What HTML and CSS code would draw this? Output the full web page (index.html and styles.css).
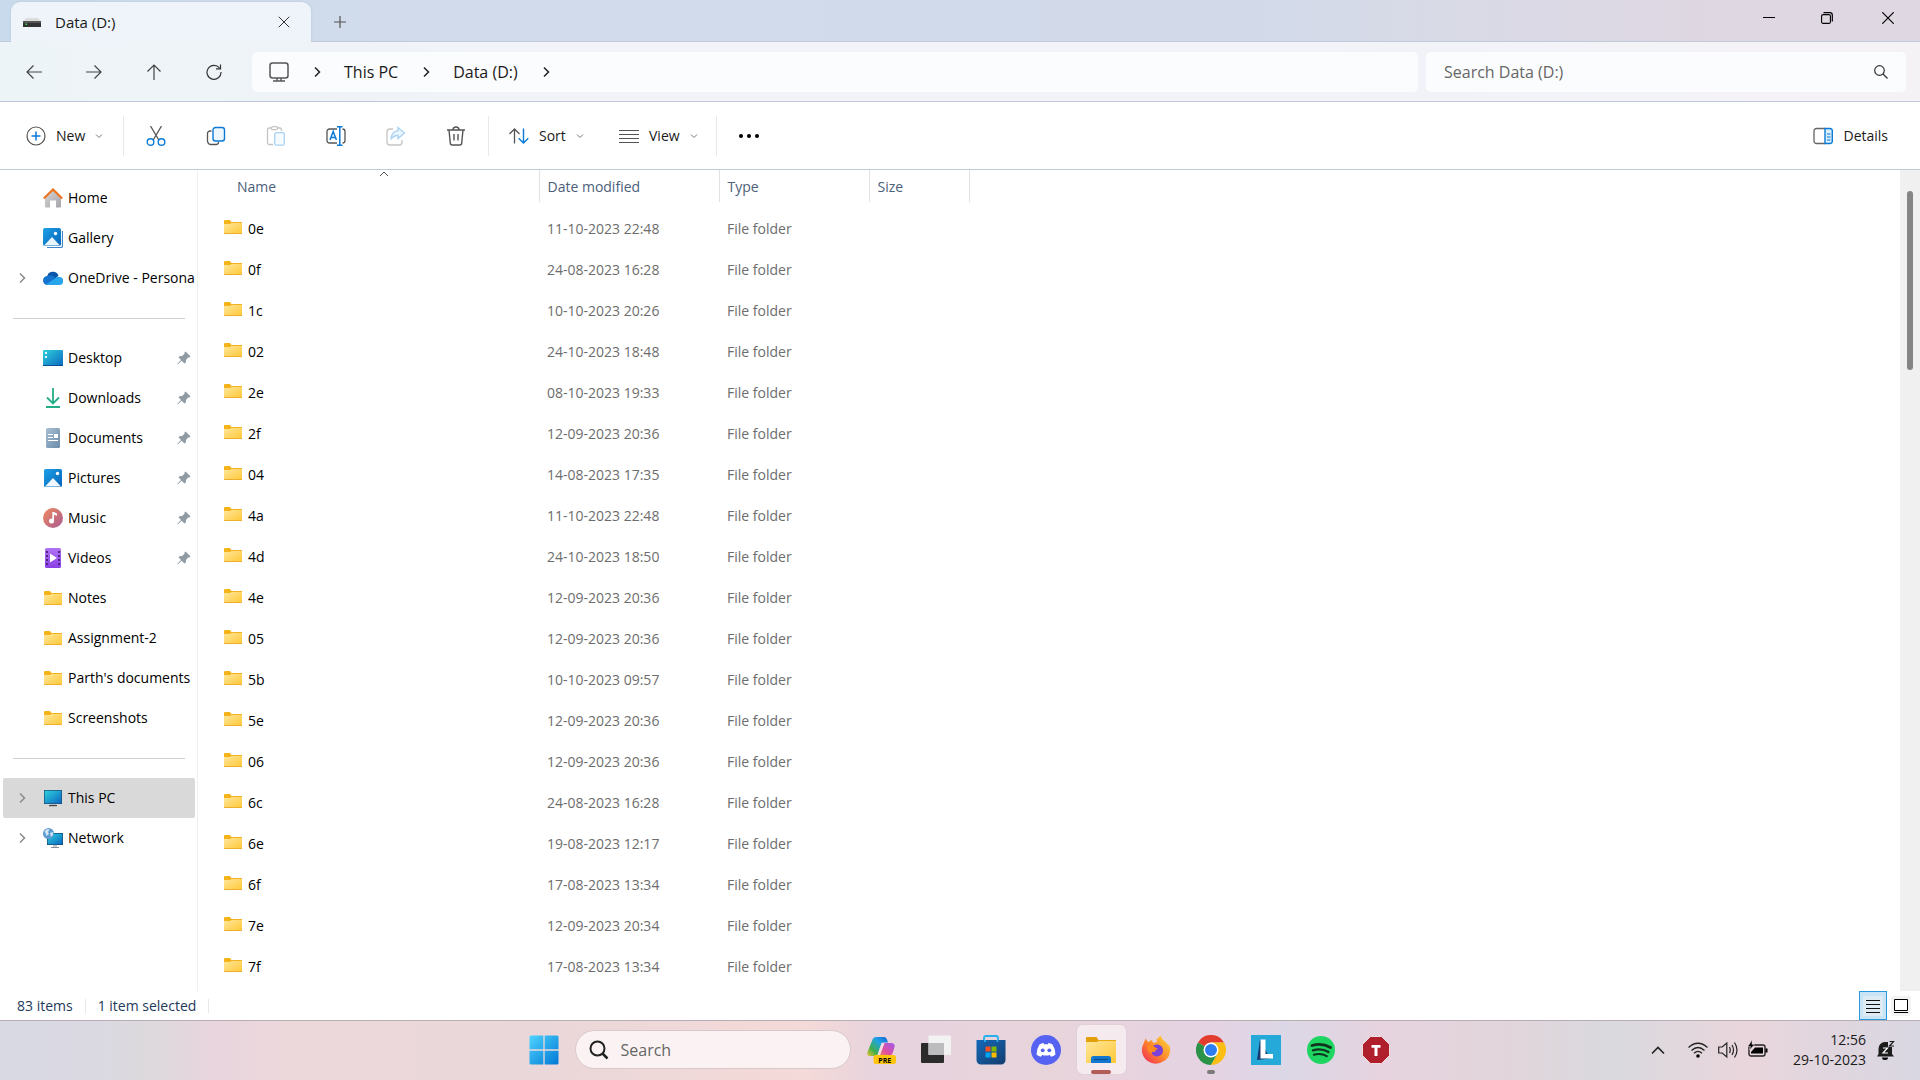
FILE: index.html
```html
<!DOCTYPE html>
<html lang="en">
<head>
<meta charset="utf-8">
<title>Data (D:)</title>
<link rel="stylesheet" href="styles.css">
</head>
<body>
<svg class="sprite" aria-hidden="true">
  <defs>
    <linearGradient id="g-folder" x1="0" y1="0" x2="1" y2="1"><stop offset="0" stop-color="#ffe69a"/><stop offset="1" stop-color="#ffc837"/></linearGradient>
    <linearGradient id="g-blue" x1="0" y1="0" x2="1" y2="1"><stop offset="0" stop-color="#1ba0e8"/><stop offset="1" stop-color="#0763b8"/></linearGradient>
    <linearGradient id="g-cyan" x1="0" y1="0" x2="1" y2="1"><stop offset="0" stop-color="#2fd0dd"/><stop offset="1" stop-color="#0a68c0"/></linearGradient>
    <linearGradient id="g-gray" x1="0" y1="0" x2="1" y2="1"><stop offset="0" stop-color="#d6d6d8"/><stop offset="1" stop-color="#a5a5aa"/></linearGradient>
    <linearGradient id="g-doc" x1="0" y1="0" x2="1" y2="1"><stop offset="0" stop-color="#a9bfd3"/><stop offset="1" stop-color="#6a8ba8"/></linearGradient>
    <linearGradient id="g-music" x1="0" y1="0" x2="1" y2="1"><stop offset="0" stop-color="#f08a5c"/><stop offset="1" stop-color="#a95b94"/></linearGradient>
    <linearGradient id="g-video" x1="0" y1="0" x2="0" y2="1"><stop offset="0" stop-color="#b073f4"/><stop offset="1" stop-color="#8a3fe4"/></linearGradient>
    <linearGradient id="g-win" x1="0" y1="0" x2="1" y2="1"><stop offset="0" stop-color="#4fd4ff"/><stop offset="1" stop-color="#0078d4"/></linearGradient>
    <linearGradient id="g-copa" x1="1" y1="0" x2="0" y2="1"><stop offset="0" stop-color="#1a5fd0"/><stop offset=".35" stop-color="#1fa3e6"/><stop offset=".7" stop-color="#3fae4f"/><stop offset="1" stop-color="#e9c526"/></linearGradient>
    <linearGradient id="g-copb" x1="1" y1="0" x2="0" y2="1"><stop offset="0" stop-color="#a05af0"/><stop offset=".6" stop-color="#e0509c"/><stop offset="1" stop-color="#f2903c"/></linearGradient>
    <linearGradient id="g-store" x1="0" y1="0" x2="1" y2="1"><stop offset="0" stop-color="#1568b8"/><stop offset="1" stop-color="#123e6e"/></linearGradient>
    <linearGradient id="g-fox" x1="1" y1="0" x2="0" y2="1"><stop offset="0" stop-color="#ffe03a"/><stop offset=".5" stop-color="#ff8a2a"/><stop offset="1" stop-color="#f0225c"/></linearGradient>
  </defs>
  <symbol id="folder" viewBox="0 0 18 14"><path d="M0 1q0-1 1-1h5l1.500 2v2H0z" fill="#f5b31a"/><path d="M7 2h11v2H7z" fill="#f2b122"/><path d="M0 4h6l1.500-1H18v11H0z" fill="url(#g-folder)"/><path d="M0 13h18v1H0z" fill="#eeb02c"/></symbol>
  <symbol id="chev-r" viewBox="0 0 8 12"><path d="M2 1.500 6.500 6 2 10.500" fill="none" stroke="currentColor" stroke-width="1.500"/></symbol>
  <symbol id="chev-d" viewBox="0 0 8 6"><path d="M1 1.500 4 4.500 7 1.500" fill="none" stroke="#777" stroke-width="1"/></symbol>
  <symbol id="pin" viewBox="0 0 14 14"><path d="M8.500.500 13.500 5.200 12.500 6.400 11 6.500 9 9 8.800 11.500 7.500 12.500 4.700 9.700 1 13.200.300 13.500.700 12.600 4 9 1.500 6.300 2.500 5.200 5.200 5 7.500 2.800 7.600 1.200z" fill="#909aa3"/></symbol>
</svg>

<div class="window">
  <header class="titlebar">
    <div class="tab">
      <svg class="i18" viewBox="0 0 18 18"><path d="M3 5h12l3 4H0z" fill="#dcdcdc"/><path d="M0 8h18v6H0z" fill="#333"/><path d="M0 8h18v2H0z" fill="#555"/><path d="M2.500 10.500h1.500V12H2.500z" fill="#3be04a"/></svg>
      <span class="tab-title">Data (D:)</span>
      <button class="icon-btn tab-close" aria-label="Close tab"><svg class="i12" viewBox="0 0 12 12"><path d="M.800.800 11.200 11.200M11.200.800.800 11.200" fill="none" stroke="#333" stroke-width="1"/></svg></button>
    </div>
    <button class="icon-btn new-tab" aria-label="New tab"><svg class="i12" viewBox="0 0 12 12"><path d="M6 0v12M0 6h12" fill="none" stroke="#555" stroke-width="1.200"/></svg></button>
    <div class="win-controls">
      <button class="icon-btn win-btn" aria-label="Minimize"><svg class="i12" viewBox="0 0 12 12"><path d="M0 5.500h12" stroke="#000"/></svg></button>
      <button class="icon-btn win-btn" aria-label="Restore"><svg class="i12" viewBox="0 0 12 12"><rect x=".600" y="2.600" width="8.800" height="8.800" rx="1.500" fill="none" stroke="#000" stroke-width="1.100"/><path d="M2.500.700H9A2.300 2.300 0 0 1 11.300 3V9.500" fill="none" stroke="#000" stroke-width="1.200"/></svg></button>
      <button class="icon-btn win-btn" aria-label="Close"><svg class="i12" viewBox="0 0 12 12"><path d="M.300.300 11.700 11.700M11.700.300.300 11.700" stroke="#000" stroke-width="1.200"/></svg></button>
    </div>
  </header>

  <div class="navbar">
    <div class="nav-buttons">
      <button class="icon-btn nav-btn" aria-label="Back"><svg class="i16" viewBox="0 0 16 16"><path d="M16 8H1M7.500 1.500 1 8 7.500 14.500" fill="none" stroke="#444" stroke-width="1.200"/></svg></button>
      <button class="icon-btn nav-btn" aria-label="Forward"><svg class="i16" viewBox="0 0 16 16"><path d="M0 8H15M8.500 1.500 15 8 8.500 14.500" fill="none" stroke="#444" stroke-width="1.200"/></svg></button>
      <button class="icon-btn nav-btn" aria-label="Up"><svg class="i16" viewBox="0 0 16 16"><path d="M8 16V1M1.500 7.500 8 1 14.500 7.500" fill="none" stroke="#444" stroke-width="1.200"/></svg></button>
      <button class="icon-btn nav-btn" aria-label="Refresh"><svg class="i16" viewBox="0 0 16 16"><path d="M13.500 4A7 7 0 1 0 15 8M14.500.500V4.800H10" fill="none" stroke="#333" stroke-width="1.200"/></svg></button>
    </div>
    <nav class="address" aria-label="Path">
      <svg class="i20 crumb-icon" viewBox="0 0 20 20"><rect x="1" y="1" width="18" height="15" rx="2.500" fill="none" stroke="#555" stroke-width="1.500"/><path d="M8 16v3M12 16v3M4 19h12" stroke="#555" stroke-width="1.400"/></svg>
      <svg class="crumb-sep"><use href="#chev-r"/></svg>
      <a class="crumb" href="#pc">This PC</a>
      <svg class="crumb-sep"><use href="#chev-r"/></svg>
      <a class="crumb" href="#data">Data (D:)</a>
      <svg class="crumb-sep"><use href="#chev-r"/></svg>
    </nav>
    <div class="searchbox">
      <input class="search-input" type="text" placeholder="Search Data (D:)" aria-label="Search Data (D:)">
      <svg class="i14" viewBox="0 0 14 14"><circle cx="5.500" cy="5.500" r="4.800" fill="none" stroke="#333" stroke-width="1.200"/><path d="M9 9 13.500 13.500" stroke="#333" stroke-width="1.200"/></svg>
    </div>
  </div>

  <div class="toolbar">
    <button class="tool tool-new"><svg class="i20" viewBox="0 0 20 20"><circle cx="10" cy="10" r="9" fill="none" stroke="#555" stroke-width="1.200"/><path d="M10 5.500v9M5.500 10h9" stroke="#0b7ad6" stroke-width="1.500"/></svg><span>New</span><svg class="caret"><use href="#chev-d"/></svg></button>
    <span class="tool-sep"></span>
    <button class="tool-icon" aria-label="Cut"><svg class="i20" viewBox="0 0 20 20"><path d="M4.500 0 12.800 14M15.500 0 7.200 14" fill="none" stroke="#555" stroke-width="1.300"/><circle cx="4.500" cy="16" r="3.300" fill="none" stroke="#0b7ad6" stroke-width="1.400"/><circle cx="15.500" cy="16" r="3.300" fill="none" stroke="#0b7ad6" stroke-width="1.400"/></svg></button>
    <button class="tool-icon" aria-label="Copy"><svg class="i20" viewBox="0 0 20 20"><path d="M5.500 5H4a2.500 2.500 0 0 0-2.500 2.500V15A3.500 3.500 0 0 0 5 18.500h5A2.500 2.500 0 0 0 12.500 16" fill="none" stroke="#555" stroke-width="1.300"/><rect x="7" y="1.500" width="11.500" height="13.500" rx="2.500" fill="#eef7fe" stroke="#0b7ad6" stroke-width="1.400"/></svg></button>
    <button class="tool-icon" aria-label="Paste" disabled><svg class="i20" viewBox="0 0 20 20"><path d="M5 2H3a1.500 1.500 0 0 0-1.500 1.500V17A1.500 1.500 0 0 0 3 18.500h4M12 2h2a1.500 1.500 0 0 1 1.500 1.500V5" fill="none" stroke="#c4c4c4" stroke-width="1.300"/><rect x="5.500" y=".700" width="6" height="3" rx="1.200" fill="none" stroke="#c4c4c4" stroke-width="1.200"/><rect x="8.700" y="6.700" width="9.600" height="12.500" rx="1.500" fill="#f5faff" stroke="#a9d2f3" stroke-width="1.300"/></svg></button>
    <button class="tool-icon" aria-label="Rename"><svg class="i20" viewBox="0 0 20 20"><path d="M11 3H3.500A2.500 2.500 0 0 0 1 5.500v9A2.500 2.500 0 0 0 3.500 17H11M16.500 3A2.500 2.500 0 0 1 19 5.500v9A2.500 2.500 0 0 1 16.500 17" fill="none" stroke="#555" stroke-width="1.300"/><path d="M4 14 7.200 5.500 10.400 14M5 11.500h4.400" fill="none" stroke="#0b7ad6" stroke-width="1.500"/><path d="M13.800 1v18M11 .800h5.500M11 19.200h5.500" fill="none" stroke="#0b7ad6" stroke-width="1.500"/></svg></button>
    <button class="tool-icon" aria-label="Share" disabled><svg class="i20" viewBox="0 0 20 20"><path d="M7 3H4a3 3 0 0 0-3 3v10a3 3 0 0 0 3 3h9a3 3 0 0 0 3-3v-2" fill="none" stroke="#c4c4c4" stroke-width="1.300"/><path d="M12 1.500 18.500 7 12 12.500V9.500C8.500 9.500 6.500 10.500 5 13.500 5 8.500 8 5 12 4.700z" fill="#eaf5fe" stroke="#a9d2f3" stroke-width="1.300"/></svg></button>
    <button class="tool-icon" aria-label="Delete"><svg class="i20" viewBox="0 0 20 20"><path d="M1 4h18M7 4a3 3 0 0 1 6 0M3 4l1.300 13A2 2 0 0 0 6.300 19h7.400a2 2 0 0 0 2-2L17 4M8 8v6.500M12 8v6.500" fill="none" stroke="#555" stroke-width="1.400"/></svg></button>
    <span class="tool-sep"></span>
    <button class="tool tool-sort"><svg class="i20" viewBox="0 0 20 20"><path d="M5.500 17.500V3M.500 8 5.500 3 10.500 8" fill="none" stroke="#555" stroke-width="1.300"/><path d="M14.500 2.500V17M9.700 12.200 14.500 17 19.300 12.200" fill="none" stroke="#0b7ad6" stroke-width="1.400"/></svg><span>Sort</span><svg class="caret"><use href="#chev-d"/></svg></button>
    <button class="tool tool-view"><svg class="i20" viewBox="0 0 20 20"><path d="M0 4.500h20M0 8.500h20M0 12.500h20M0 16.500h20" stroke="#555" stroke-width="1.200"/></svg><span>View</span><svg class="caret"><use href="#chev-d"/></svg></button>
    <span class="tool-sep"></span>
    <button class="tool-icon" aria-label="See more"><svg class="i20" viewBox="0 0 20 20"><circle cx="2" cy="10" r="2"/><circle cx="10" cy="10" r="2"/><circle cx="18" cy="10" r="2"/></svg></button>
    <button class="tool tool-details"><svg class="i20" viewBox="0 0 20 20"><path d="M12 2.500H3.500A2.500 2.500 0 0 0 1 5v10a2.500 2.500 0 0 0 2.500 2.500H12" fill="none" stroke="#666" stroke-width="1.300"/><path d="M12 2.500h5A2.300 2.300 0 0 1 19.300 5v10A2.300 2.300 0 0 1 17 17.500h-5z" fill="#d9effd" stroke="#0b7ad6" stroke-width="1.400"/><path d="M14 8h3.500M14 11h3.500M14 14h3.500" stroke="#0b7ad6" stroke-width="1.200"/></svg><span>Details</span></button>
  </div>

  <div class="content">
    <nav class="sidebar" aria-label="Folders">
      <a class="side-item" href="#home"><svg class="i20" viewBox="0 0 20 20"><path d="M2 9 10 2l8 7v9.500q0 1-1 1h-4v-7H7v7H3q-1 0-1-1z" fill="url(#g-gray)"/><path d="M.800 10.500 10 1.500 19.200 10.500" fill="none" stroke="#ee7420" stroke-width="2.200"/></svg><span>Home</span></a>
      <a class="side-item" href="#gallery"><svg class="i20" viewBox="0 0 20 20"><path d="M4 19.500h14q1.500 0 1.500-1.500V3" fill="none" stroke="#3f86cc" stroke-width="1.200"/><rect width="18" height="18" rx="2" fill="url(#g-blue)"/><path d="M1 17.500 9 9l8 8.500z" fill="#e8f5fd"/><circle cx="12.500" cy="5.500" r="1.700" fill="#fff"/></svg><span>Gallery</span></a>
      <a class="side-item" href="#onedrive"><svg class="expand"><use href="#chev-r"/></svg><svg class="i20" viewBox="0 0 20 20"><path d="M4 9a6 6 0 0 1 11.500-1.500L10 13z" fill="#0a56a8"/><path d="M4.500 8a4.500 4.500 0 0 0 0 9h6l4-5C12 8 8 6.500 4.500 8z" fill="#1573cf"/><path d="M5 17 3 16.500 12 10.500q2-2.500 4.500-1.500a4 4 0 0 1-.500 8z" fill="#28a4ea"/></svg><span class="clip">OneDrive - Persona</span></a>
      <hr class="side-rule">
      <a class="side-item" href="#desktop"><svg class="i20" viewBox="0 0 20 20"><rect y="2" width="20" height="16" rx="1" fill="url(#g-cyan)"/><path d="M2 4h2v2H2zM2 8h2v2H2z" fill="#e6fbff"/><path d="M0 17h20v1H0z" fill="#0b4e94"/></svg><span>Desktop</span><svg class="pin"><use href="#pin"/></svg></a>
      <a class="side-item" href="#downloads"><svg class="i20" viewBox="0 0 20 20"><path d="M10 0v15M4 9.500 10 15.500 16 9.500M3 19h14" fill="none" stroke="#24ad88" stroke-width="1.800"/></svg><span>Downloads</span><svg class="pin"><use href="#pin"/></svg></a>
      <a class="side-item" href="#documents"><svg class="i20" viewBox="0 0 20 20"><rect x="3" width="14" height="20" rx="1.500" fill="url(#g-doc)"/><path d="M5 6.500h5M5 9.500h5M5 12.500h10" stroke="#fff"/><path d="M11 6h4v4h-4z" fill="#fff"/></svg><span>Documents</span><svg class="pin"><use href="#pin"/></svg></a>
      <a class="side-item" href="#pictures"><svg class="i20" viewBox="0 0 20 20"><rect x="1" y="1" width="18" height="18" rx="1.500" fill="url(#g-blue)"/><path d="M2 18.500 10 10l8 8.500z" fill="#eef8fe"/><circle cx="14.500" cy="5.500" r="1.700" fill="#fff"/></svg><span>Pictures</span><svg class="pin"><use href="#pin"/></svg></a>
      <a class="side-item" href="#music"><svg class="i20" viewBox="0 0 20 20"><circle cx="10" cy="10" r="10" fill="url(#g-music)"/><circle cx="8.500" cy="13" r="2.500" fill="#fff"/><path d="M9.300 4h1.700l3 1.500v2.200l-3-1V13H9.300z" fill="#fff"/></svg><span>Music</span><svg class="pin"><use href="#pin"/></svg></a>
      <a class="side-item" href="#videos"><svg class="i20" viewBox="0 0 20 20"><rect x="2" width="16" height="20" rx="1.500" fill="url(#g-video)"/><path d="M4 3v15M16 3v15" stroke="#4c2680" stroke-width="2" stroke-dasharray="2 2"/><path d="M7 5.500 14 10l-7 4.500z" fill="#fff"/></svg><span>Videos</span><svg class="pin"><use href="#pin"/></svg></a>
      <a class="side-item" href="#notes"><svg class="folder"><use href="#folder"/></svg><span>Notes</span></a>
      <a class="side-item" href="#assignment"><svg class="folder"><use href="#folder"/></svg><span>Assignment-2</span></a>
      <a class="side-item" href="#parth"><svg class="folder"><use href="#folder"/></svg><span>Parth's documents</span></a>
      <a class="side-item" href="#screenshots"><svg class="folder"><use href="#folder"/></svg><span>Screenshots</span></a>
      <hr class="side-rule">
      <a class="side-item selected" href="#pc"><svg class="expand"><use href="#chev-r"/></svg><svg class="i20" viewBox="0 0 20 20"><path d="M7 15h6v3H7z" fill="#b9c0c6"/><path d="M6 17h8v1.200H6z" fill="#444"/><path d="M1 2h18v14H1z" fill="#1b4e78"/><path d="M1.700 2.700h16.600v12.600H1.700z" fill="url(#g-cyan)"/></svg><span>This PC</span></a>
      <a class="side-item" href="#network"><svg class="expand"><use href="#chev-r"/></svg><svg class="i20" viewBox="0 0 20 20"><path d="M10 16h4v3h-4z" fill="#c4cad0"/><path d="M8 19h8v1H8z" fill="#8a9299"/><path d="M4 5h16v12H4z" fill="#174b78"/><path d="M4.700 5.700h14.600v10.600H4.700z" fill="url(#g-cyan)"/><circle cx="5.500" cy="5.500" r="5.500" fill="#5d9bd0"/><path d="M1.500 3q3-3 5-1.500L5 4 6 6 3.500 8zM7 5l3-1v3L8 9z" fill="#cfe3f2"/></svg><span>Network</span></a>
    </nav>

    <main class="files">
      <svg class="sort-mark" viewBox="0 0 10 6"><path d="M1 5 5 1 9 5" fill="none" stroke="#555"/></svg>
      <table class="file-table">
        <colgroup><col class="c-name"><col class="c-date"><col class="c-type"><col class="c-size"><col></colgroup>
        <thead><tr><th>Name</th><th>Date modified</th><th>Type</th><th>Size</th><th class="fill"></th></tr></thead>
        <tbody>
          <tr><td><svg class="folder"><use href="#folder"/></svg>0e</td><td>11-10-2023 22:48</td><td>File folder</td><td></td><td></td></tr>
          <tr><td><svg class="folder"><use href="#folder"/></svg>0f</td><td>24-08-2023 16:28</td><td>File folder</td><td></td><td></td></tr>
          <tr><td><svg class="folder"><use href="#folder"/></svg>1c</td><td>10-10-2023 20:26</td><td>File folder</td><td></td><td></td></tr>
          <tr><td><svg class="folder"><use href="#folder"/></svg>02</td><td>24-10-2023 18:48</td><td>File folder</td><td></td><td></td></tr>
          <tr><td><svg class="folder"><use href="#folder"/></svg>2e</td><td>08-10-2023 19:33</td><td>File folder</td><td></td><td></td></tr>
          <tr><td><svg class="folder"><use href="#folder"/></svg>2f</td><td>12-09-2023 20:36</td><td>File folder</td><td></td><td></td></tr>
          <tr><td><svg class="folder"><use href="#folder"/></svg>04</td><td>14-08-2023 17:35</td><td>File folder</td><td></td><td></td></tr>
          <tr><td><svg class="folder"><use href="#folder"/></svg>4a</td><td>11-10-2023 22:48</td><td>File folder</td><td></td><td></td></tr>
          <tr><td><svg class="folder"><use href="#folder"/></svg>4d</td><td>24-10-2023 18:50</td><td>File folder</td><td></td><td></td></tr>
          <tr><td><svg class="folder"><use href="#folder"/></svg>4e</td><td>12-09-2023 20:36</td><td>File folder</td><td></td><td></td></tr>
          <tr><td><svg class="folder"><use href="#folder"/></svg>05</td><td>12-09-2023 20:36</td><td>File folder</td><td></td><td></td></tr>
          <tr><td><svg class="folder"><use href="#folder"/></svg>5b</td><td>10-10-2023 09:57</td><td>File folder</td><td></td><td></td></tr>
          <tr><td><svg class="folder"><use href="#folder"/></svg>5e</td><td>12-09-2023 20:36</td><td>File folder</td><td></td><td></td></tr>
          <tr><td><svg class="folder"><use href="#folder"/></svg>06</td><td>12-09-2023 20:36</td><td>File folder</td><td></td><td></td></tr>
          <tr><td><svg class="folder"><use href="#folder"/></svg>6c</td><td>24-08-2023 16:28</td><td>File folder</td><td></td><td></td></tr>
          <tr><td><svg class="folder"><use href="#folder"/></svg>6e</td><td>19-08-2023 12:17</td><td>File folder</td><td></td><td></td></tr>
          <tr><td><svg class="folder"><use href="#folder"/></svg>6f</td><td>17-08-2023 13:34</td><td>File folder</td><td></td><td></td></tr>
          <tr><td><svg class="folder"><use href="#folder"/></svg>7e</td><td>12-09-2023 20:34</td><td>File folder</td><td></td><td></td></tr>
          <tr><td><svg class="folder"><use href="#folder"/></svg>7f</td><td>17-08-2023 13:34</td><td>File folder</td><td></td><td></td></tr>
        </tbody>
      </table>
    </main>
    <div class="scrollbar"><div class="thumb"></div></div>
  </div>

  <footer class="status">
    <span class="status-cell">83 items</span>
    <span class="status-cell">1 item selected</span>
    <div class="view-modes">
      <button class="mode mode-on" aria-label="Details view"><svg class="i20" viewBox="0 0 20 20"><rect width="20" height="20" rx="2" fill="#dfebf2"/><path d="M3 4.500h14M3 8.500h14M3 12.500h14M3 16.500h14" stroke="#111"/></svg></button>
      <button class="mode" aria-label="Large icons view"><svg class="i20" viewBox="0 0 20 20"><rect width="20" height="20" rx="2" fill="#f3f3f3"/><path d="M3.500 3.500h13v11h-13z" fill="#fff" stroke="#000"/><path d="M3 16.500h14" stroke="#000"/></svg></button>
    </div>
  </footer>
</div>

<div class="taskbar">
  <div class="apps">
    <button class="app" aria-label="Start"><svg class="i30" viewBox="0 0 30 30"><rect x=".500" y=".500" width="29" height="29" rx="1.500" fill="url(#g-win)"/><path d="M15 0v30M0 15h30" stroke="#ecd9db" stroke-width="1.300"/></svg></button>
    <label class="task-search"><svg class="i20" viewBox="0 0 20 20"><circle cx="8.500" cy="8.500" r="7" fill="none" stroke="#222" stroke-width="2"/><path d="M13.500 13.500 18.500 18.500" stroke="#222" stroke-width="2.500"/></svg><input class="task-input" type="text" placeholder="Search" aria-label="Search"></label>
    <button class="app" aria-label="Copilot"><svg class="i30" viewBox="0 0 30 30"><path d="M7 3.500Q8 2 10 2h8q2 0 2.800 2l1.200 3.500h-4.500Q15.500 8 14.500 11l-2.500 8q-.800 2-3 2H4q-3.500 0-2.500-4z" fill="url(#g-copa)"/><path d="M18.500 8h7q4 .500 3 4l-1.500 5q-1 4-5 4H11.500q2 0 2.700-2.500z" fill="url(#g-copb)"/><path d="M17 8l-4.500 13" stroke="#f5d9e4" stroke-width="2.500"/><rect x="7.500" y="20" width="22.500" height="9" rx="2.500" fill="#ffc40c"/><text class="pre" x="18.800" y="27.500" text-anchor="middle">PRE</text></svg></button>
    <button class="app" aria-label="Task view"><svg class="i30" viewBox="0 0 30 30"><rect x="0" y="8" width="23" height="20" rx="1" fill="#2b2b2b"/><rect x="7.500" y=".500" width="22.500" height="19.500" rx="1" fill="#f2f2f2"/><path d="M7.500 8H23v12H7.500z" fill="#bcbcbe"/></svg></button>
    <button class="app" aria-label="Store"><svg class="i30" viewBox="0 0 30 30"><path d="M8 7V3q0-2 2-2h10q2 0 2 2v4" fill="none" stroke="#26b1ee" stroke-width="1.800"/><path d="M.500 5h29v20a4.500 4.500 0 0 1-4.500 4.500H5A4.500 4.500 0 0 1 .500 25z" fill="url(#g-store)"/><path d="M8 5h1.800v2H8zM20.500 5h1.800v2h-1.800z" fill="#26b1ee"/><path d="M9.500 11.500h5v5h-5z" fill="#f25022"/><path d="M15.500 11.500h5v5h-5z" fill="#7fba00"/><path d="M9.500 17.500h5v5h-5z" fill="#00a4ef"/><path d="M15.500 17.500h5v5h-5z" fill="#ffb900"/></svg></button>
    <button class="app" aria-label="Discord"><svg class="i30" viewBox="0 0 30 30"><circle cx="15" cy="15" r="15" fill="#5562f2"/><path d="M8.500 9.500Q10.500 8.200 12.500 8l.700 1.200h3.600L17.500 8q2 .200 4 1.500 3 4.500 3 10-2 1.800-4.500 2.200l-1-1.700q-4 1-8 0L10 21.700q-2.500-.400-4.500-2.200 0-5.500 3-10z" fill="#fff"/><circle cx="11.700" cy="15.300" r="1.900" fill="#5562f2"/><circle cx="18.300" cy="15.300" r="1.900" fill="#5562f2"/></svg></button>
    <button class="app app-active" aria-label="File Explorer"><svg class="i30" viewBox="0 0 30 30"><path d="M0 3q0-1 1-1h9.500l2 3v4H0z" fill="#e3a00b"/><path d="M12 5h18v4H12z" fill="#e8a90f"/><path d="M0 7h11l2-1h17v22H0z" fill="url(#g-folder)"/><path d="M5 28v-4.500Q5 21 7.500 21h15q2.500 0 2.500 2.500V28z" fill="#1378cf"/><path d="M8 24.500h14" stroke="#0a4f96" stroke-width="1.200"/></svg></button>
    <button class="app" aria-label="Firefox"><svg class="i30" viewBox="0 0 30 30"><path d="M3 7.500 4.500 3.500 7 7l4-2 1 3 4-1-.500-2.500L19.500.500 22 5q3.500 2 5 5l1.500.500Q31 20 24 25.500 15 31.500 6.500 26-1 20 1.500 11z" fill="url(#g-fox)"/><circle cx="16" cy="15.500" r="6" fill="#7a42d8"/><path d="M6 12q4-3 8.500.500L17 14q-3 .500-3 3-3.500-1-4 2-3-2-4-7z" fill="#ff8a1e"/></svg></button>
    <button class="app app-running" aria-label="Chrome"><svg class="i30" viewBox="0 0 30 30"><path d="M15 15 2 7.500A15 15 0 0 1 28 7.500H15z" fill="#e33b2e"/><path d="M2 7.500A15 15 0 0 0 15 30l6.500-11.250L15 15z" fill="#2a9347"/><path d="M28 7.500A15 15 0 0 1 15 30l6.500-11.250L15 15V7.500z" fill="#fcbd14"/><circle cx="15" cy="15" r="7.500" fill="#fff"/><circle cx="15" cy="15" r="6" fill="#2d7df0"/></svg></button>
    <button class="app" aria-label="L"><svg class="i30" viewBox="0 0 30 30"><path d="M0 0h30v30H0z" fill="#25a9d9"/><path d="M9 4.500 6 25l13-1.500z" fill="#173a6e"/><path d="M9.500 4.500h5V19H22v4.500H9.500z" fill="#fff"/></svg></button>
    <button class="app" aria-label="Spotify"><svg class="i30" viewBox="0 0 30 30"><circle cx="15" cy="15" r="14" fill="#1fd562"/><path d="M6 10.500q10-3 18.500 2" fill="none" stroke="#10331d" stroke-width="2.800" stroke-linecap="round"/><path d="M7 15.300q8.500-2.500 15.500 1.700" fill="none" stroke="#10331d" stroke-width="2.300" stroke-linecap="round"/><path d="M7.800 19.800q7-2 13 1.400" fill="none" stroke="#10331d" stroke-width="2" stroke-linecap="round"/></svg></button>
    <button class="app" aria-label="T"><svg class="i30" viewBox="0 0 30 30"><path d="M9.500 1.500h11l8 8v11l-8 8h-11l-8-8v-11z" fill="#b01f2c" stroke="#f3dede" stroke-width="1"/><path d="M10.500 10h9v2.800h-3V21h-3v-8.200h-3z" fill="#fff"/></svg></button>
  </div>
  <div class="tray">
    <button class="icon-btn tray-btn" aria-label="Show hidden icons"><svg class="i14" viewBox="0 0 14 14"><path d="M1 10.500 7 4.500 13 10.500" fill="none" stroke="#222" stroke-width="1.600"/></svg></button>
    <button class="icon-btn status-icons" aria-label="Network, volume, battery">
      <svg class="i20" viewBox="0 0 20 20"><path d="M.500 7.500Q10-1 19.500 7.500M3.500 10.500Q10 4.500 16.500 10.500M6 13.200Q10 9.500 14 13.200" fill="none" stroke="#222" stroke-width="1.300"/><circle cx="10" cy="16" r="1.800"/></svg>
      <svg class="i20" viewBox="0 0 20 20"><path d="M.700 7h3.500L8.800 3v14L4.200 13H.700z" fill="none" stroke="#222" stroke-width="1.200"/><path d="M11.500 7q1.500 3 0 6M14 5q3 5 0 10M16.500 2.500q5 7.500 0 15" fill="none" stroke="#222" stroke-width="1.200"/></svg>
      <svg class="i20" viewBox="0 0 20 20"><rect x="1" y="5" width="16" height="11" rx="2" fill="none" stroke="#222" stroke-width="1.400"/><path d="M3 12 7 7.500h8v6H3zM17.500 8.500h2v4h-2z"/><path d="M4 0 0 6.500h2.500L1.500 10 6.500 4.500H4z" stroke="#ead7dd" stroke-width=".500"/></svg>
    </button>
    <time class="clock"><span>12:56</span><span>29-10-2023</span></time>
    <button class="icon-btn" aria-label="Notifications"><svg class="i20" viewBox="0 0 20 20"><path d="M2.500 9a6.500 6.500 0 0 1 7-7H12v5h4v7l2 2.500H1L2.500 14z" fill="#1c1c1c"/><path d="M6 17.500h6a3 2.500 0 0 1-6 0z"/><path d="M7 8h4.500L7 13h5" fill="none" stroke="#fff" stroke-width="1.200"/><path d="M13.500 1.500h4L13.500 6H18" fill="none" stroke="#1c1c1c" stroke-width="1.200"/></svg></button>
  </div>
</div>
</body>
</html>
```
FILE: styles.css
```css
* { box-sizing: border-box; }

body {
  margin: 0;
  min-height: 100vh;
  display: flex;
  flex-direction: column;
  background: #fff;
  color: #1a1a1a;
  font-family: "Open Sans", "Noto Sans", sans-serif;
  font-size: 14px;
  line-height: 20px;
}

button, input { font: inherit; color: inherit; }
button { border: 0; padding: 0; background: none; }
a { color: inherit; text-decoration: none; }
svg { display: block; flex: none; }

.sprite { position: absolute; width: 0; height: 0; }
.i12 { width: 12px; height: 12px; }
.i14 { width: 14px; height: 14px; }
.i16 { width: 16px; height: 16px; }
.i18 { width: 18px; height: 18px; }
.i20 { width: 20px; height: 20px; }
.i30 { width: 30px; height: 30px; }
.folder { width: 18px; height: 14px; }
.icon-btn { display: flex; align-items: center; justify-content: center; }

.window { flex: 1; display: flex; flex-direction: column; }

/* Title bar with tabs */
.titlebar {
  display: flex;
  align-items: stretch;
  height: 42px;
  padding: 2px 0 0 11px;
  background: linear-gradient(90deg, #c8daec, #d1dbeb 20%, #d2daea 65%, #d8dae6 75%, #dfd7e2 90%, #dfd7e2);
  border-bottom: 1px solid #c0cadb;
}
.tab {
  display: flex;
  align-items: center;
  width: 300px;
  height: 40px;
  padding: 0 21px 0 12px;
  border-radius: 9px 9px 0 0;
  background: #eef4f9;
  box-shadow: 0 0 2px #b3c1d3;
  clip-path: inset(-2px -2px 0 -2px);
}
.tab-title { flex: 1; padding-left: 14px; font-size: 15px; }
.new-tab { width: 58px; }
.win-controls { display: flex; margin-left: auto; height: 32px; }
.win-btn { width: 58px; }
.win-btn:last-child { width: 64px; }

/* Navigation row */
.navbar {
  display: flex;
  align-items: center;
  gap: 8px;
  height: 60px;
  padding-right: 14px;
  background: linear-gradient(90deg, #edf4f8, #f1f3f9 30%, #f1f3f9 70%, #f5f2f6);
  border-bottom: 1px solid #c0cadb;
}
.nav-buttons { display: flex; padding-left: 4px; }
.nav-btn { width: 60px; height: 40px; }
.address, .searchbox {
  display: flex;
  align-items: center;
  height: 40px;
  border-radius: 5px;
  background: #fbfcfd;
  font-size: 16px;
}
.address { flex: 1; padding-left: 17px; }
.crumb-icon { margin-right: 24px; }
.crumb-sep { width: 8px; height: 12px; color: #222; }
.crumb { padding: 0 24px 0 23px; }
.searchbox { width: 25vw; padding: 0 18px; }
.search-input, .task-input { flex: 1; min-width: 0; border: 0; padding: 0; outline: 0; background: none; }
.search-input::placeholder, .task-input::placeholder { color: #666; opacity: 1; }

/* Command bar */
.toolbar {
  display: flex;
  align-items: center;
  height: 68px;
  padding: 0 32px 0 26px;
  border-bottom: 1px solid #c0c8da;
}
.tool { display: flex; align-items: center; gap: 10px; height: 40px; }
.tool-new { width: 95px; }
.tool-sort { width: 128px; padding-left: 18px; }
.tool-view { width: 95px; }
.tool-details { margin-left: auto; }
.tool-icon { width: 60px; height: 40px; display: flex; align-items: center; justify-content: center; }
.tool-sep { width: 1px; height: 40px; margin: 0 2px; background: #e8e8e8; }
.caret { width: 8px; height: 6px; }

/* Sidebar and file list */
.content { flex: 1; display: flex; }
.sidebar { width: 198px; padding: 8px 2px 0 3px; border-right: 1px solid #f0f0f0; color: #000; }
.side-item {
  display: flex;
  align-items: center;
  gap: 5px;
  height: 40px;
  padding: 0 0 0 40px;
  border-radius: 2px;
}
.side-item .folder { margin: 0 1px; }
.side-item.selected { background: #d9d9d9; }
.side-item:has(.expand) { padding-left: 15px; }
.expand { width: 8px; height: 12px; margin-right: 12px; color: #8a8a8a; }
.clip { overflow: hidden; white-space: nowrap; }
.pin { width: 14px; height: 14px; margin-left: auto; margin-right: 4px; }
.side-rule { height: 1px; margin: 20px 10px 19px; border: 0; background: #d0d0d0; }

.files { flex: 1; position: relative; }
.sort-mark { position: absolute; left: 181px; top: 1px; width: 10px; height: 6px; }
.file-table { width: 100%; table-layout: fixed; border-collapse: collapse; }
.c-name { width: 341px; }
.c-date { width: 180px; }
.c-type { width: 150px; }
.c-size { width: 100px; }
.file-table th {
  height: 32px;
  padding: 2px 0 0 8px;
  border-right: 1px solid #e2e2e2;
  font-weight: 400;
  text-align: left;
  color: #4c607a;
}
.file-table th.fill { border-right: 0; }
.file-table th:first-child { padding-left: 39px; }
.file-table thead::after { content: ""; display: block; height: 6px; }
.file-table td { height: 41px; padding: 0 0 0 8px; color: #6d6d6d; }
.file-table td:first-child { padding-left: 26px; color: #000; }
.file-table .folder { display: inline-block; margin-right: 6px; vertical-align: baseline; }

.scrollbar { width: 20px; padding: 21px 7px 0; background: #f0f0f0; }
.thumb { height: 179px; border-radius: 3px; background: #858585; }

/* Status bar */
.status { display: flex; align-items: center; height: 29px; padding-left: 17px; color: #1e395b; }
.status-cell { padding-right: 12px; margin-right: 12px; border-right: 1px solid #e8e8e8; line-height: 14px; }
.view-modes { display: flex; margin-left: auto; padding-right: 5px; }
.mode { display: flex; align-items: center; justify-content: center; width: 28px; height: 29px; }
.mode-on { border: 1px solid #2a97dc; background: #c9e4f4; }

/* Taskbar */
.taskbar {
  display: grid;
  grid-template-columns: 1fr auto 1fr;
  align-items: center;
  height: 60px;
  padding-bottom: 2px;
  border-top: 1px solid #b8adb2;
  background: linear-gradient(90deg, #d9d9e4 0, #dad9e2 5%, #ddd9dc 8%, #e8d5de 11%, #ecd8db 15%, #ead7d9 28%, #f4dad8 42%, #e6d3de 46%, #e8d4db 55%, #e5d3e3 63%, #dcd7e6 67%, #e6d3df 72%, #e2d5db 78%, #d9d9de 84%, #e9d6dc 91%, #dfd6df 96%, #d9d7e2 100%);
}
.apps { grid-column: 2; display: flex; align-items: center; gap: 6px; }
.app {
  position: relative;
  display: flex;
  align-items: center;
  justify-content: center;
  width: 49px;
  height: 49px;
  border-radius: 5px;
}
.app-active { background: #f5eaee; box-shadow: 0 0 1px #b9a9b0; }
.app-active::after, .app-running::after {
  content: "";
  position: absolute;
  bottom: 0;
  width: 20px;
  height: 4px;
  border-radius: 2px;
  background: #b25d57;
}
.app-running::after { width: 8px; background: #7d7a7e; }
.pre { font: 700 7px "Open Sans", sans-serif; }
.task-search {
  display: flex;
  align-items: center;
  gap: 12px;
  width: 276px;
  height: 39px;
  padding: 0 13px;
  border: 1px solid #d9c8cb;
  border-radius: 20px;
  background: #fbf3f3;
  font-size: 16px;
}
.tray { display: flex; align-items: center; justify-content: flex-end; padding-right: 24px; }
.tray-btn { width: 34px; height: 40px; }
.status-icons { gap: 10px; margin: 0 20px 0 13px; }
.clock { display: flex; flex-direction: column; align-items: flex-end; width: 78px; margin-right: 10px; }
```
